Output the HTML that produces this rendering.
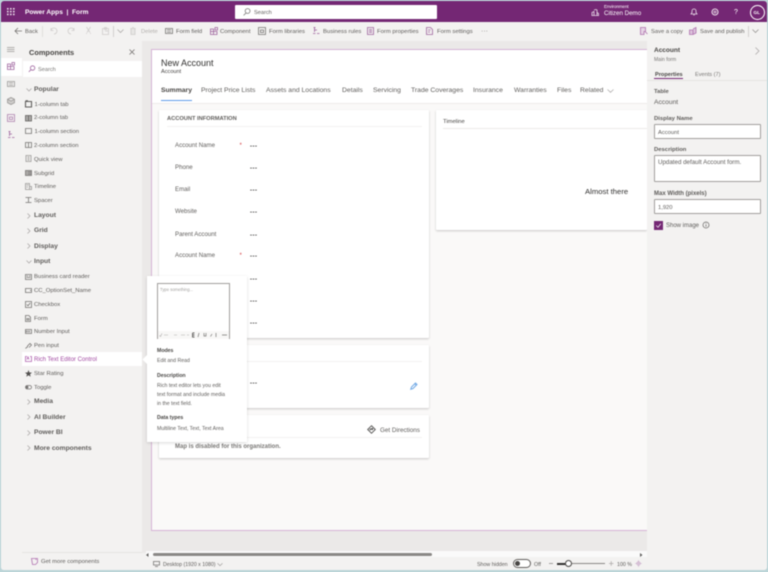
<!DOCTYPE html>
<html><head><meta charset="utf-8"><style>
html,body{margin:0;padding:0;width:768px;height:572px;overflow:hidden;background:#bcd5d8}
#a{position:absolute;left:1px;top:1px;width:766px;height:569px;overflow:hidden;background:#f3f2f1;border-radius:3px;filter:blur(.45px)}
#r{position:absolute;left:-1px;top:-1px;width:768px;height:572px;font-family:"Liberation Sans",sans-serif;color:#605e5c}
#r div,#r span.t{position:absolute}
.t{position:absolute;white-space:nowrap;font-size:6px;line-height:10px;height:10px;margin-top:.7px}
.b{font-weight:bold}
.card{background:#fff;box-shadow:0 1px 2px rgba(0,0,0,.2);border-radius:1px}
.h{font-size:6.700px;font-weight:bold;color:#605e5c}
.i{font-size:5.900px}
.l{font-size:6.100px}
.x{letter-spacing:.5px;color:#323130;font-size:6px;font-weight:bold}
.in{background:#fff;border:1px solid #a19f9d;border-radius:1px;box-sizing:border-box}
svg{position:absolute;overflow:visible;fill:none;stroke:#605e5c;stroke-width:.8;opacity:.85}
</style></head><body><div id="a"><div id="r">

<!-- top bar -->
<div style="left:0;top:0;width:768px;height:22px;background:#742774"></div>
<svg style="left:7px;top:8px" width="8" height="7"><g fill="#fff" stroke="none"><rect x="0" y="0" width="1.600" height="1.600"/><rect x="3" y="0" width="1.600" height="1.600"/><rect x="6" y="0" width="1.600" height="1.600"/><rect x="0" y="2.800" width="1.600" height="1.600"/><rect x="3" y="2.800" width="1.600" height="1.600"/><rect x="6" y="2.800" width="1.600" height="1.600"/><rect x="0" y="5.600" width="1.600" height="1.600"/><rect x="3" y="5.600" width="1.600" height="1.600"/><rect x="6" y="5.600" width="1.600" height="1.600"/></g></svg>
<span class="t b" style="left:25px;top:7px;color:#fff;font-size:6.600px">Power Apps&nbsp; | &nbsp;Form</span>
<div style="left:235px;top:5px;width:202px;height:14px;background:#fff;border-radius:1px"></div>
<svg style="left:243px;top:8px" width="8" height="8"><circle cx="4.600" cy="3" r="2.400"/><path d="M3 5L.6 7.400"/></svg>
<span class="t" style="left:254px;top:7px;font-size:5.600px">Search</span>
<svg style="left:591px;top:9px" width="8" height="7"><path style="stroke:#fff" d="M1 6.500V3.500L3 2.500V6.500M3 1L5 .5 6 1V6.500M6 3.500L7.500 4.500V6.500M.5 6.500H8"/></svg>
<span class="t" style="left:604px;top:1.500px;color:#fff;font-size:4.400px">Environment</span>
<span class="t" style="left:604px;top:8.500px;color:#fff;font-size:6.200px">Citizen Demo</span>
<svg style="left:690px;top:8px" width="8" height="8"><path style="stroke:#fff" d="M1 6H7L6 4.500V3A2 2 0 0 0 2 3V4.500ZM3.200 7H4.800"/></svg>
<svg style="left:711px;top:8px" width="8" height="8"><circle style="stroke:#fff;stroke-width:1.100" cx="4" cy="4" r="3"/><circle style="stroke:#fff" cx="4" cy="4" r="1"/></svg>
<span class="t" style="left:734px;top:7px;color:#fff;font-size:7px">?</span>
<div style="left:750px;top:5px;width:13px;height:13px;border:1px solid #fff;border-radius:50%"></div>
<span class="t b" style="left:753.500px;top:7px;color:#fff;font-size:4.600px">GL</span>

<!-- command bar -->
<div style="left:0;top:22px;width:768px;height:19px;background:#f3f2f1"></div>
<svg style="left:14px;top:27px" width="9" height="8"><path d="M8 4H1M4 1L1 4 4 7"/></svg>
<span class="t" style="left:25px;top:26px;font-size:5.800px">Back</span>
<div style="left:42px;top:26px;width:1px;height:11px;background:#e1dfdd"></div>
<svg style="left:50px;top:27px" width="8" height="8"><path style="stroke:#c8c6c4" d="M1 1V3.500H3.500M1 3.500A3 3 0 1 1 4 7"/></svg>
<svg style="left:67px;top:27px" width="8" height="8"><path style="stroke:#c8c6c4" d="M7 1V3.500H4.500M7 3.500A3 3 0 1 0 4 7"/></svg>
<svg style="left:85px;top:27px" width="7" height="8"><path style="stroke:#c8c6c4" d="M1.500 0L5 5.500M5.500 0L2 5.500M2 6.500H1M6 6.500H5"/></svg>
<svg style="left:102px;top:27px" width="7" height="8"><path style="stroke:#c8c6c4" d="M.5 1.500H6.500V7.500H.5ZM2.500 .5H4.500V2.500H2.500ZM3 4H6"/></svg>
<div style="left:113px;top:26px;width:1px;height:11px;background:#d2d0ce"></div>
<svg style="left:117px;top:29px" width="7" height="4"><path style="stroke:#a19f9d" d="M.5 .5L3.500 3.500 6.500 .5"/></svg>
<svg style="left:130px;top:27px" width="6" height="8"><path style="stroke:#c8c6c4;fill:#e6e4e2" d="M1 1.500H5V7.500H1ZM.3 1.500H5.700M2.200 .5H3.800"/></svg>
<span class="t" style="left:141px;top:26px;color:#b3b0ad;font-size:5.800px">Delete</span>
<svg style="left:165px;top:28px" width="8" height="6"><path d="M.5 .5H7.500V5.500H.5ZM2 2H6M2 4H6"/></svg>
<span class="t" style="left:176px;top:26px;font-size:5.900px">Form field</span>
<svg style="left:210px;top:27px" width="8" height="8"><path style="stroke:#8e4a8e" d="M.5 2H3.500V7.500H.5ZM3.500 4.500H7V7.500H3.500ZM5 .5H7.500V3H5ZM.5 4.500H3.500"/></svg>
<span class="t" style="left:220px;top:26px;font-size:5.900px">Component</span>
<svg style="left:258px;top:27px" width="8" height="8"><path d="M.5 .5H7.500V7.500H.5ZM2.500 3H5.500V5.500H2.500Z"/></svg>
<span class="t" style="left:269px;top:26px;font-size:5.900px">Form libraries</span>
<svg style="left:312px;top:27px" width="8" height="8"><path style="stroke:#8e4a8e" d="M2.500 .5V5M2.500 3H5M1.500 .5H3.500M1 6.500H3.500M5 6.500H7.500"/></svg>
<span class="t" style="left:323px;top:26px;font-size:5.900px">Business rules</span>
<svg style="left:367px;top:27px" width="7" height="8"><path style="stroke:#8e4a8e" d="M.5 .5H6.500V7.500H.5ZM2 2.500H5M2 4H5M2 5.500H5"/></svg>
<span class="t" style="left:377px;top:26px;font-size:5.900px">Form properties</span>
<svg style="left:426px;top:27px" width="8" height="8"><path style="stroke:#8e4a8e" d="M.5 .5H4.500L6.500 2.500V7.500H.5ZM2 3H4.500M2 5H4"/></svg>
<span class="t" style="left:437px;top:26px;font-size:5.900px">Form settings</span>
<span class="t" style="left:481px;top:26px;font-size:7px;color:#8a8886">···</span>
<svg style="left:640px;top:27px" width="8" height="8"><path style="stroke:#a45ca4;fill:#e4cfe4" d="M.5 .5H5.500V4.500H4V7.500H.5ZM5 4.500L7.500 7"/></svg>
<span class="t" style="left:651px;top:26px;font-size:5.800px">Save a copy</span>
<svg style="left:689px;top:27px" width="9" height="8"><path style="stroke:#a45ca4;fill:#d9bcd9" d="M.5 3H4V7.500H.5ZM4 2L7 .5V6L4 7.500"/></svg>
<span class="t" style="left:700px;top:26px;font-size:5.800px">Save and publish</span>
<div style="left:748px;top:26px;width:1px;height:11px;background:#d2d0ce"></div>
<svg style="left:752px;top:29px" width="7" height="4"><path style="stroke:#8a8886" d="M.5 .5L3.500 3.500 6.500 .5"/></svg>

<!-- rail -->
<div style="left:0;top:41px;width:22px;height:531px;background:#f3f2f1"></div>
<div style="left:1px;top:58px;width:21px;height:18px;background:#fff"></div>
<svg style="left:7px;top:47px" width="8" height="5"><path style="stroke:#8a8886" d="M0 .5H7.500M0 2.500H7.500M0 4.500H7.500"/></svg>
<svg style="left:7px;top:62px" width="8" height="8"><path style="stroke:#8e4a8e" d="M.5 2H3.500V7.500H.5ZM3.500 4.500H7V7.500H3.500ZM5 .5H7.500V3H5ZM.5 4.500H3.500"/></svg>
<svg style="left:7px;top:81px" width="8" height="6"><path style="stroke:#8a8886" d="M.5 .5H7.500V5.500H.5ZM2 2H6M2 4H6"/></svg>
<svg style="left:7px;top:97px" width="8" height="8"><path style="stroke:#8a8886;fill:#c8c6c4" d="M4 .5L7.500 2.200V5.800L4 7.500.5 5.800V2.200ZM.5 2.200L4 4 7.500 2.200"/></svg>
<svg style="left:7px;top:114px" width="8" height="8"><path style="stroke:#a06aa0" d="M.5 .5H7.500V7.500H.5ZM2.500 3H5.500V5.500H2.500Z"/></svg>
<svg style="left:7px;top:131px" width="8" height="8"><path style="stroke:#8e4a8e" d="M2.500 .5V5M2.500 3H5M1.500 .5H3.500M1 6.500H3.500M5 6.500H7.500"/></svg>

<!-- sidebar -->
<div style="left:22px;top:41px;width:120px;height:531px;background:#f3f2f1"></div>
<span class="t" style="left:29px;top:46.500px;font-size:7.400px;line-height:11px;font-weight:bold;color:#484644">Components</span>
<svg style="left:128.500px;top:49px" width="6" height="6"><path d="M.5 .5L5.500 5.500M5.500 .5L.5 5.500"/></svg>
<div style="left:23px;top:61px;width:119px;height:16px;background:#fff"></div>
<svg style="left:28px;top:65px" width="8" height="8"><circle style="stroke:#8e4a8e" cx="4.600" cy="3" r="2.200"/><path style="stroke:#8e4a8e" d="M3 4.700L.8 6.900"/></svg>
<span class="t" style="left:38px;top:64.500px;font-size:5.600px;color:#797775">Search</span>
<svg style="left:26px;top:87.500px" width="6" height="4"><path style="stroke:#a19f9d" d="M.5 .5L3 3 5.500 .5"/></svg>
<span class="t h" style="left:34px;top:84px">Popular</span>

<svg style="left:25px;top:100px" width="7" height="8"><path style="stroke:#484644;stroke-width:1.100" d="M.5 1.500H6.500V7H.5ZM.5 .8H3"/></svg>
<span class="t i" style="left:34.500px;top:99px">1-column tab</span>
<svg style="left:25px;top:114px" width="7" height="8"><path style="stroke:#484644;fill:#a19f9d" d="M.5 1.500H6.500V7H.5ZM3.500 1.500V7"/></svg>
<span class="t i" style="left:34px;top:112.500px">2-column tab</span>
<svg style="left:25px;top:128px" width="7" height="6"><path d="M.5 .5H6.500V5.500H.5Z"/></svg>
<span class="t i" style="left:34.500px;top:126.500px">1-column section</span>
<svg style="left:25px;top:142px" width="7" height="6"><path d="M.5 .5H6.500V5.500H.5ZM3.500 .5V5.500"/></svg>
<span class="t i" style="left:34px;top:140px">2-column section</span>
<svg style="left:25px;top:155px" width="7" height="7"><path style="stroke:#8a8886" d="M1 .5H6V6.500H1ZM2.500 2H4.500M2.500 3.500H4.500M2.500 5H4.500"/></svg>
<span class="t i" style="left:34px;top:154px">Quick view</span>
<svg style="left:25px;top:170px" width="7" height="6"><path style="fill:#a19f9d" d="M.5 .5H6.500V5.500H.5ZM3 2H6M3 4H6"/></svg>
<span class="t i" style="left:34px;top:168px">Subgrid</span>
<svg style="left:25px;top:183px" width="7" height="7"><path style="stroke:#8a8886" d="M.5 .5H4.500V6.500H.5ZM1.500 2H3.500M4.500 3.500H6.500V6.500H3.500M1.500 4H3"/></svg>
<span class="t i" style="left:34px;top:181.700px">Timeline</span>
<svg style="left:25px;top:197px" width="7" height="6"><path d="M.5 .5H6.500M3.500 .5V5.500M.5 5.500H6.500"/></svg>
<span class="t i" style="left:34px;top:195.500px">Spacer</span>

<svg style="left:27px;top:212.500px" width="4" height="6"><path style="stroke:#a19f9d" d="M.5 .5L3 3 .5 5.500"/></svg>
<span class="t h" style="left:34px;top:210px">Layout</span>
<svg style="left:27px;top:227.500px" width="4" height="6"><path style="stroke:#a19f9d" d="M.5 .5L3 3 .5 5.500"/></svg>
<span class="t h" style="left:34px;top:225.500px">Grid</span>
<svg style="left:27px;top:243px" width="4" height="6"><path style="stroke:#a19f9d" d="M.5 .5L3 3 .5 5.500"/></svg>
<span class="t h" style="left:34px;top:241px">Display</span>
<svg style="left:26px;top:260px" width="6" height="4"><path style="stroke:#a19f9d" d="M.5 .5L3 3 5.500 .5"/></svg>
<span class="t h" style="left:34px;top:256.700px">Input</span>

<svg style="left:25px;top:273.500px" width="7" height="6"><path d="M.5 .5H6.500V5.500H.5ZM1.500 2H3M4 2H5.500M1.500 3.500H5.500"/></svg>
<span class="t i" style="left:34px;top:271.500px">Business card reader</span>
<svg style="left:25px;top:287.500px" width="7" height="6"><path d="M.5 .5H6.500V4.500H.5ZM5 2.500H6"/></svg>
<span class="t i" style="left:34px;top:285.500px">CC_OptionSet_Name</span>
<svg style="left:25px;top:300.500px" width="7" height="7"><path d="M.5 .5H6.500V6.500H.5ZM1.800 3.500L3 4.800 5.200 2"/></svg>
<span class="t i" style="left:34px;top:299px">Checkbox</span>
<svg style="left:25px;top:314.500px" width="6" height="7"><path d="M.5 .5H3.800L5.500 2.200V6.500H.5ZM2 3.500H4V5H2Z"/></svg>
<span class="t i" style="left:34px;top:313px">Form</span>
<svg style="left:25px;top:329px" width="7" height="5"><path d="M.5 .5H6.500V4.500H.5ZM1.500 1.500V3.500M3 1.500V3.500M4.500 1.500V3.500"/></svg>
<span class="t i" style="left:34px;top:326.500px">Number Input</span>
<svg style="left:25px;top:342px" width="7" height="7"><path d="M.5 6.500C1.500 5 3 5.500 2.500 4L5 1.500 6.500 3 4 5.500"/></svg>
<span class="t i" style="left:34px;top:340.500px">Pen input</span>

<div style="left:22px;top:352px;width:120px;height:14px;background:#fff"></div>
<svg style="left:25px;top:356px" width="7" height="6"><path style="stroke:#a24ba2" d="M2 .5H.5V5.500H6.500V.5H5M2 3.500L3 1 4 3.500"/></svg>
<span class="t i" style="left:34px;top:354.500px;font-size:6px;color:#a24ba2">Rich Text Editor Control</span>

<svg style="left:25px;top:369.500px" width="7" height="7"><path style="fill:#323130;stroke:none" d="M3.500 0L4.400 2.500 7 2.600 5 4.200 5.700 6.800 3.500 5.300 1.300 6.800 2 4.200 0 2.600 2.600 2.500Z"/></svg>
<span class="t i" style="left:34px;top:368px">Star Rating</span>
<svg style="left:25px;top:384.500px" width="7" height="5"><rect x=".5" y=".5" width="6" height="3.500" rx="1.700"/><circle style="fill:#605e5c" cx="2" cy="2.200" r="1"/></svg>
<span class="t i" style="left:34px;top:382px">Toggle</span>

<svg style="left:27px;top:398.500px" width="4" height="6"><path style="stroke:#a19f9d" d="M.5 .5L3 3 .5 5.500"/></svg>
<span class="t h" style="left:34px;top:396.500px">Media</span>
<svg style="left:27px;top:414px" width="4" height="6"><path style="stroke:#a19f9d" d="M.5 .5L3 3 .5 5.500"/></svg>
<span class="t h" style="left:34px;top:412px">AI Builder</span>
<svg style="left:27px;top:429.500px" width="4" height="6"><path style="stroke:#a19f9d" d="M.5 .5L3 3 .5 5.500"/></svg>
<span class="t h" style="left:34px;top:427.500px">Power BI</span>
<svg style="left:27px;top:445px" width="4" height="6"><path style="stroke:#a19f9d" d="M.5 .5L3 3 .5 5.500"/></svg>
<span class="t h" style="left:34px;top:443px">More components</span>

<div style="left:22px;top:552px;width:120px;height:1px;background:#e6e4e2"></div>
<svg style="left:31px;top:558px" width="7" height="7"><path style="stroke:#a45ca4" d="M.5 .5H6.500V4.500L4.500 6.500H1.500L.5 .5ZM5 .5V2"/></svg>
<span class="t" style="left:41px;top:556px;font-size:5.900px">Get more components</span>

<!-- canvas -->
<div style="left:142px;top:41px;width:505px;height:512px;background:#ebe9e8"></div>
<div style="left:151px;top:49px;width:496px;height:482px;box-sizing:border-box;border:1px solid #d6b4d6;border-right:0;background:#faf9f8"></div>
<div style="left:152px;top:50px;width:495px;height:53px;background:#fff;border-bottom:1px solid #edebe9"></div>
<span class="t" style="left:161px;top:56px;font-size:9px;line-height:12px;height:12px;color:#323130">New Account</span>
<span class="t" style="left:161px;top:66px;font-size:5.600px;color:#484644">Account</span>
<span class="t b" style="left:161px;top:85.500px;font-size:6.800px;color:#484644">Summary</span>
<div style="left:161px;top:99.500px;width:31px;height:1.200px;background:#5f9be8"></div>
<span class="t" style="left:201px;top:85.500px;font-size:6.800px">Project Price Lists</span>
<span class="t" style="left:266px;top:85.500px;font-size:6.800px">Assets and Locations</span>
<span class="t" style="left:342px;top:85.500px;font-size:6.800px">Details</span>
<span class="t" style="left:373px;top:85.500px;font-size:6.800px">Servicing</span>
<span class="t" style="left:411px;top:85.500px;font-size:6.800px">Trade Coverages</span>
<span class="t" style="left:473px;top:85.500px;font-size:6.800px">Insurance</span>
<span class="t" style="left:514px;top:85.500px;font-size:6.800px">Warranties</span>
<span class="t" style="left:557px;top:85.500px;font-size:6.800px">Files</span>
<span class="t" style="left:580px;top:85.500px;font-size:6.800px">Related</span>
<svg style="left:607px;top:89px" width="7" height="4"><path style="stroke:#a19f9d" d="M.5 .5L3.500 3.300 6.500 .5"/></svg>

<!-- card 1 -->
<div class="card" style="left:159px;top:110px;width:270px;height:228px"></div>
<span class="t b" style="left:167px;top:113px;font-size:5.700px;color:#605e5c">ACCOUNT INFORMATION</span>
<div style="left:167px;top:126px;width:255px;height:1px;background:#f3f2f1"></div>
<span class="t l" style="left:175px;top:140px">Account Name</span><span class="t" style="left:239.500px;top:140px;color:#d13438">*</span><span class="t x" style="left:250px;top:141px">---</span>
<span class="t l" style="left:175px;top:162px">Phone</span><span class="t x" style="left:250px;top:163px">---</span>
<span class="t l" style="left:175px;top:184px">Email</span><span class="t x" style="left:250px;top:185px">---</span>
<span class="t l" style="left:175px;top:206.500px">Website</span><span class="t x" style="left:250px;top:207px">---</span>
<span class="t l" style="left:175px;top:229px">Parent Account</span><span class="t x" style="left:250px;top:230px">---</span>
<span class="t l" style="left:175px;top:250.500px">Account Name</span><span class="t" style="left:239.500px;top:250.500px;color:#d13438">*</span><span class="t x" style="left:250px;top:251.500px">---</span>
<span class="t x" style="left:250px;top:274px">---</span>
<span class="t x" style="left:250px;top:296px">---</span>
<span class="t x" style="left:250px;top:318.500px">---</span>

<!-- card 2 -->
<div class="card" style="left:159px;top:345px;width:270px;height:63px"></div>
<div style="left:167px;top:361px;width:255px;height:1px;background:#f3f2f1"></div>
<span class="t x" style="left:250px;top:378px">---</span>
<svg style="left:410px;top:382px" width="8" height="8"><path style="stroke:#5a9be0;stroke-width:1" d="M.8 7.200L1.500 5 5.500 1 7 2.500 3 6.500ZM4.700 1.800L6.200 3.300"/></svg>

<!-- card 3 -->
<div class="card" style="left:159px;top:415px;width:270px;height:43px"></div>
<svg style="left:367px;top:425px" width="9" height="9"><path style="stroke:#323130;stroke-width:.9" d="M4.500 .7L8.300 4.500 4.500 8.300 .7 4.500ZM3.200 5.500V4H5.800M4.800 3L5.800 4 4.800 5"/></svg>
<span class="t" style="left:380px;top:425px;font-size:6.300px">Get Directions</span>
<div style="left:167px;top:437px;width:255px;height:1px;background:#f3f2f1"></div>
<span class="t b" style="left:175px;top:441px;font-size:6px;color:#797775">Map is disabled for this organization.</span>

<!-- timeline -->
<div class="card" style="left:436px;top:110px;width:211px;height:120px"></div>
<span class="t" style="left:443px;top:116px;font-size:5.800px;color:#484644">Timeline</span>
<div style="left:443px;top:128px;width:204px;height:1px;background:#edebe9"></div>
<span class="t" style="left:585px;top:186px;font-size:7.700px;color:#323130">Almost there</span>

<!-- popup -->
<div style="left:147px;top:276px;width:100px;height:166px;background:#fff;box-shadow:0 1px 3px rgba(0,0,0,.15)"></div>
<svg style="left:142px;top:354px;opacity:1" width="6" height="11"><path style="fill:#fff;stroke:none" d="M5.500 .5V10.500L.5 5.500Z"/></svg>
<div style="left:157px;top:283px;width:73px;height:56px;box-sizing:border-box;border:1px solid #a19f9d;border-bottom:0;background:#fff"></div>
<div style="left:158px;top:331px;width:71px;height:8px;background:#f8f7f6"></div>
<span class="t" style="left:160px;top:284px;font-size:4.200px;color:#a19f9d">Type something...</span>
<svg style="left:159px;top:332px" width="70" height="6"><path style="stroke:#a19f9d;stroke-width:.6" d="M.5 3.500L1.500 4.500 3 1.500M5 3H9M15 3H18M22 3H26M28 3H30"/><path style="stroke:#484644;stroke-width:.9" d="M33.500 1V5H35.500M33.500 3H35.500M33.500 1H35.500"/><path style="stroke:#605e5c;stroke-width:.7" d="M39 5L40 1M45 1V4H47V1M51.500 4.500L53 2M57 1V5M63 3H68"/></svg>
<span class="t b" style="left:157px;top:345px;font-size:5.200px;color:#484644">Modes</span>
<span class="t" style="left:157px;top:355.500px;font-size:5.200px">Edit and Read</span>
<span class="t b" style="left:157px;top:370px;font-size:5.200px;color:#484644">Description</span>
<span class="t" style="left:157px;top:380.500px;font-size:5.200px">Rich text editor lets you edit</span>
<span class="t" style="left:157px;top:389px;font-size:5.200px">text format and include media</span>
<span class="t" style="left:157px;top:398px;font-size:5.200px">in the text field.</span>
<span class="t b" style="left:157px;top:412.500px;font-size:5.200px;color:#484644">Data types</span>
<span class="t" style="left:157px;top:423px;font-size:5.200px">Multiline Text, Text, Text Area</span>

<!-- right panel -->
<div style="left:647px;top:41px;width:121px;height:531px;background:#f3f2f1"></div>
<span class="t b" style="left:654px;top:45.500px;font-size:6.500px;color:#484644">Account</span>
<svg style="left:755px;top:47px" width="5" height="8"><path style="stroke:#a19f9d" d="M.5 .5L4 4 .5 7.500"/></svg>
<span class="t" style="left:654px;top:54.500px;font-size:5px;color:#797775">Main form</span>
<span class="t b" style="left:655px;top:69px;font-size:5.600px;color:#484644">Properties</span>
<span class="t" style="left:695px;top:69px;font-size:5.600px;color:#797775">Events (7)</span>
<div style="left:654px;top:78px;width:29px;height:1px;background:#742774"></div>
<div style="left:647px;top:80px;width:121px;height:1px;background:#e6e4e2"></div>
<span class="t b" style="left:654px;top:86.500px;font-size:5.800px;color:#605e5c">Table</span>
<span class="t" style="left:654px;top:97.500px;font-size:6.700px">Account</span>
<span class="t b" style="left:654px;top:113px;font-size:5.900px;color:#605e5c">Display Name</span>
<div class="in" style="left:654px;top:124px;width:107px;height:15px"></div>
<span class="t" style="left:658px;top:127px;font-size:5.800px">Account</span>
<span class="t b" style="left:654px;top:144px;font-size:5.900px;color:#605e5c">Description</span>
<div class="in" style="left:654px;top:155px;width:107px;height:27px"></div>
<span class="t" style="left:658px;top:157px;font-size:6.200px">Updated default Account form.</span>
<span class="t b" style="left:654px;top:188.500px;font-size:6px;color:#605e5c">Max Width (pixels)</span>
<div class="in" style="left:654px;top:199px;width:107px;height:15px"></div>
<span class="t" style="left:658px;top:202px;font-size:5.800px">1,920</span>
<div style="left:654px;top:221px;width:9px;height:9px;background:#742774"></div>
<svg style="left:655px;top:222px" width="7" height="7"><path style="stroke:#fff" d="M1.200 3.500L3 5.300 5.800 1.700"/></svg>
<span class="t" style="left:666px;top:220.500px;font-size:6px">Show image</span>
<svg style="left:702px;top:221px" width="8" height="8"><circle cx="4" cy="4" r="3"/><path d="M4 3.500V5.800M4 2V2.800"/></svg>

<!-- scrollbar + status -->
<div style="left:146px;top:551px;width:501px;height:6px;background:#fafafa"></div>
<div style="left:153px;top:553px;width:279px;height:3px;background:#8a8886;border-radius:1.500px"></div>
<svg style="left:146px;top:552.500px" width="3" height="4"><path style="fill:#484644;stroke:none" d="M2.500 0V4L0 2Z"/></svg>
<svg style="left:640px;top:552.500px" width="3" height="4"><path style="fill:#484644;stroke:none" d="M0 0V4L2.500 2Z"/></svg>
<div style="left:142px;top:557px;width:505px;height:15px;background:#f3f2f1"></div>
<svg style="left:153px;top:561px" width="7" height="6"><path d="M.5 .5H6.500V4H.5ZM2 5.500H5"/></svg>
<span class="t" style="left:163px;top:559.500px;font-size:5.200px">Desktop (1920 x 1080)</span>
<svg style="left:217px;top:563px" width="6" height="3"><path style="stroke:#a19f9d" d="M.5 .3L3 2.700 5.500 .3"/></svg>
<span class="t" style="left:477px;top:559.500px;font-size:5.300px">Show hidden</span>
<div style="left:513px;top:559px;width:18px;height:9px;box-sizing:border-box;background:#fff;border:1px solid #605e5c;border-radius:5px"></div>
<div style="left:515px;top:561px;width:5px;height:5px;background:#484644;border-radius:50%"></div>
<span class="t" style="left:534px;top:559.500px;font-size:5.300px">Off</span>
<div style="left:549px;top:563px;width:4px;height:1px;background:#a19f9d"></div>
<div style="left:557px;top:563px;width:48px;height:1px;background:#8a8886"></div>
<div style="left:557px;top:563px;width:11px;height:1.500px;background:#323130"></div>
<div style="left:565px;top:560px;width:7px;height:7px;box-sizing:border-box;background:#fff;border:1px solid #484644;border-radius:50%"></div>
<svg style="left:609px;top:561px" width="5" height="5"><path style="stroke:#a19f9d" d="M0 2.500H4.500M2.200 .3V4.700"/></svg>
<span class="t" style="left:617px;top:559.500px;font-size:5.300px">100 %</span>
<svg style="left:635px;top:560px" width="7" height="7"><path style="stroke:#c8a8c8" d="M3.500 .3V6.700M.3 3.500H6.700"/><circle style="stroke:#c8a8c8" cx="3.500" cy="3.500" r="1.700"/></svg>

</div></div></body></html>
